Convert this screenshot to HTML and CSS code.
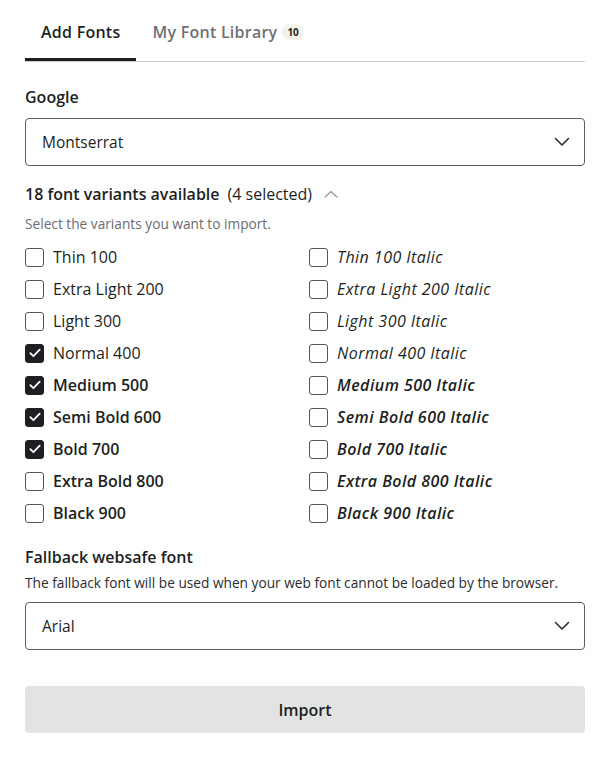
FILE: index.html
```html
<!DOCTYPE html>
<html lang="en">
<head>
<meta charset="utf-8">
<title>Add Fonts</title>
<link rel="stylesheet" href="styles.css">
</head>
<body>
<div class="panel">
  <div class="tabs">
    <div class="tab active">Add Fonts</div>
    <div class="tab">My Font Library <span class="badge">10</span></div>
  </div>

  <div class="label label-google">Google</div>
  <div class="select">
    <span>Montserrat</span>
    <svg class="chev" width="16" height="10" viewBox="0 0 16 10"><path d="M1.5 1.5 L8 8 L14.5 1.5" fill="none" stroke="#2b2d30" stroke-width="1.6" stroke-linecap="round" stroke-linejoin="round"/></svg>
  </div>

  <div class="variants-head">
    <span class="strong">18 font variants available</span>
    <span class="count">(4 selected)</span>
    <svg class="chev-up" width="16" height="10" viewBox="0 0 16 10"><path d="M2 8 L8 2.5 L14 8" fill="none" stroke="#9a9c9f" stroke-width="1.4" stroke-linecap="round" stroke-linejoin="round"/></svg>
  </div>
  <div class="hint">Select the variants you want to import.</div>

  <div class="grid">
    <label class="opt"><span class="box"></span><span class="w-reg">Thin 100</span></label>
    <label class="opt"><span class="box"></span><span class="w-reg it">Thin 100 Italic</span></label>
    <label class="opt"><span class="box"></span><span class="w-reg">Extra Light 200</span></label>
    <label class="opt"><span class="box"></span><span class="w-reg it">Extra Light 200 Italic</span></label>
    <label class="opt"><span class="box"></span><span class="w-reg">Light 300</span></label>
    <label class="opt"><span class="box"></span><span class="w-reg it">Light 300 Italic</span></label>
    <label class="opt"><span class="box on"><svg width="12" height="10" viewBox="0 0 12 10"><path d="M1.3 5.2 L4.4 8.2 L10.7 1.6" fill="none" stroke="#fff" stroke-width="1.8" stroke-linecap="round" stroke-linejoin="round"/></svg></span><span class="w-reg">Normal 400</span></label>
    <label class="opt"><span class="box"></span><span class="w-reg it">Normal 400 Italic</span></label>
    <label class="opt"><span class="box on"><svg width="12" height="10" viewBox="0 0 12 10"><path d="M1.3 5.2 L4.4 8.2 L10.7 1.6" fill="none" stroke="#fff" stroke-width="1.8" stroke-linecap="round" stroke-linejoin="round"/></svg></span><span class="w-bold">Medium 500</span></label>
    <label class="opt"><span class="box"></span><span class="w-bold it">Medium 500 Italic</span></label>
    <label class="opt"><span class="box on"><svg width="12" height="10" viewBox="0 0 12 10"><path d="M1.3 5.2 L4.4 8.2 L10.7 1.6" fill="none" stroke="#fff" stroke-width="1.8" stroke-linecap="round" stroke-linejoin="round"/></svg></span><span class="w-bold">Semi Bold 600</span></label>
    <label class="opt"><span class="box"></span><span class="w-bold it">Semi Bold 600 Italic</span></label>
    <label class="opt"><span class="box on"><svg width="12" height="10" viewBox="0 0 12 10"><path d="M1.3 5.2 L4.4 8.2 L10.7 1.6" fill="none" stroke="#fff" stroke-width="1.8" stroke-linecap="round" stroke-linejoin="round"/></svg></span><span class="w-bold">Bold 700</span></label>
    <label class="opt"><span class="box"></span><span class="w-bold it">Bold 700 Italic</span></label>
    <label class="opt"><span class="box"></span><span class="w-bold">Extra Bold 800</span></label>
    <label class="opt"><span class="box"></span><span class="w-bold it">Extra Bold 800 Italic</span></label>
    <label class="opt"><span class="box"></span><span class="w-bold">Black 900</span></label>
    <label class="opt"><span class="box"></span><span class="w-bold it">Black 900 Italic</span></label>
  </div>

  <div class="label label-fallback">Fallback websafe font</div>
  <div class="desc">The fallback font will be used when your web font cannot be loaded by the browser.</div>
  <div class="select">
    <span>Arial</span>
    <svg class="chev" width="16" height="10" viewBox="0 0 16 10"><path d="M1.5 1.5 L8 8 L14.5 1.5" fill="none" stroke="#2b2d30" stroke-width="1.6" stroke-linecap="round" stroke-linejoin="round"/></svg>
  </div>

  <button class="import">Import</button>
</div>
</body>
</html>
```

FILE: styles.css
```css
* { box-sizing: border-box; }
html, body { margin: 0; padding: 0; background: #fff; }
body {
  font-family: "Open Sans", "Noto Sans", "Liberation Sans", sans-serif;
  color: #1d1f22;
  font-size: 16px;
}
.panel { padding: 0 25px; width: 610px; }

.tabs {
  display: flex;
  border-bottom: 1px solid #c9cacc;
}
.tab {
  padding: 22px 16px 16px;
  line-height: 20px;
  font-size: 16px;
  letter-spacing: 0.25px;
  font-weight: 600;
  color: #6e7075;
  border-bottom: 3px solid transparent;
  display: flex;
  align-items: center;
  gap: 5px;
}
.tab.active { color: #1d1f22; border-bottom-color: #1d1f22; }
.badge {
  display: inline-block;
  background: #f4f2ec;
  color: #1d1f22;
  font-size: 10px;
  letter-spacing: 0;
  font-weight: 700;
  line-height: 16px;
  padding: 0 5px;
  border-radius: 8px;
}

.label {
  font-weight: 600;
  font-size: 16px;
  line-height: 20px;
}
.label-google { margin-top: 25px; margin-bottom: 11px; }

.select {
  height: 48px;
  border: 1px solid #5c5e62;
  border-radius: 4px;
  display: flex;
  align-items: center;
  justify-content: space-between;
  padding: 0 14px 0 16px;
  font-size: 15.5px;
}
.chev { display: block; }

.variants-head {
  margin-top: 18px;
  display: flex;
  align-items: center;
  line-height: 20px;
  font-size: 16px;
}
.variants-head .strong { font-weight: 600; }
.variants-head .count { margin-left: 8px; }
.chev-up { margin-left: 11px; }

.hint {
  margin-top: 11px;
  font-size: 13.7px;
  line-height: 18px;
  color: #6a6c70;
}

.grid {
  margin-top: 8px;
  display: grid;
  grid-template-columns: 276px 276px;
  column-gap: 8px;
}
.opt {
  display: flex;
  align-items: center;
  height: 32px;
  gap: 9px;
  font-size: 16px;
  line-height: 20px;
}
.box {
  width: 19px;
  height: 19px;
  border: 1.5px solid #55575b;
  border-radius: 3px;
  flex: none;
  display: flex;
  align-items: center;
  justify-content: center;
}
.box.on { background: #1d1f22; border-color: #1d1f22; }
.w-reg { font-weight: 400; }
.w-bold { font-weight: 600; }
.it { font-style: italic; letter-spacing: 0.45px; }

.label-fallback { margin-top: 18px; }
.desc {
  margin-top: 7px;
  margin-bottom: 10px;
  font-size: 13.7px;
  line-height: 18px;
  color: #2a2c30;
}

.import {
  margin-top: 36px;
  width: 100%;
  height: 47px;
  border: none;
  border-radius: 4px;
  background: #e2e3e3;
  font-family: inherit;
  font-size: 16px;
  font-weight: 600;
  color: #1d1f22;
}
```
